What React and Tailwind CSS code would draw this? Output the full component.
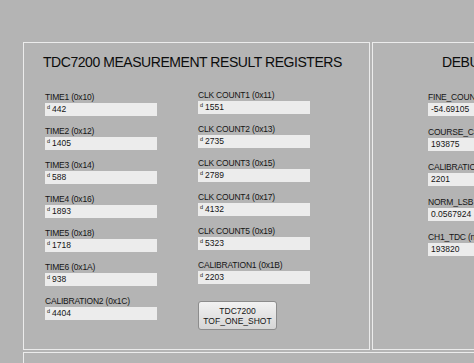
import React from 'react';

const left = [
  ['TIME1 (0x10)', '442'],
  ['TIME2 (0x12)', '1405'],
  ['TIME3 (0x14)', '588'],
  ['TIME4 (0x16)', '1893'],
  ['TIME5 (0x18)', '1718'],
  ['TIME6 (0x1A)', '938'],
  ['CALIBRATION2 (0x1C)', '4404'],
];

const right = [
  ['CLK COUNT1 (0x11)', '1551'],
  ['CLK COUNT2 (0x13)', '2735'],
  ['CLK COUNT3 (0x15)', '2789'],
  ['CLK COUNT4 (0x17)', '4132'],
  ['CLK COUNT5 (0x19)', '5323'],
  ['CALIBRATION1 (0x1B)', '2203'],
];

const debug = [
  ['FINE_COUNT', '-54.69105'],
  ['COURSE_COUNT', '193875'],
  ['CALIBRATION', '2201'],
  ['NORM_LSB', '0.0567924'],
  ['CH1_TDC (ns)', '193820'],
];

const Reg = ({ label, value }) => (
  <div className="flex flex-col">
    <div className="h-[11px] text-[8.5px] leading-[10px] tracking-[-0.2px] whitespace-nowrap text-[#141414]">{label}</div>
    <div className="h-[13px] w-[112px] bg-[#ececec] flex items-center pl-[2px] text-[8.5px] text-[#141414]">
      <span className="text-[5.5px] leading-none self-start mt-[2px] mr-[2px]">d</span>
      <span className="leading-none">{value}</span>
    </div>
  </div>
);

const Num = ({ label, value }) => (
  <div className="flex flex-col">
    <div className="h-[11px] text-[8.5px] leading-[10px] tracking-[-0.2px] whitespace-nowrap text-[#141414]">{label}</div>
    <div className="h-[13px] w-[120px] bg-[#ececec] flex items-center pl-[3px] text-[8.5px] leading-none text-[#141414]">
      {value}
    </div>
  </div>
);

export default function App() {
  return (
    <div className="w-[474px] h-[363px] overflow-hidden bg-[#b4b4b4] pt-[42px] pl-[23px] font-['Liberation_Sans',Arial,sans-serif]">
      <div className="flex gap-[2px] w-[700px]">
        <div className="w-[347px] h-[308px] border border-[#ececec] shrink-0 pt-[11px] pl-[19px]">
          <div className="text-[14px] leading-[16px] tracking-[-0.45px] text-[#0c0c0c] whitespace-nowrap">
            TDC7200 MEASUREMENT RESULT REGISTERS
          </div>
          <div className="flex gap-[41px] pl-[2px] mt-[20px]">
            <div className="flex flex-col gap-[10px] pt-[2px]">
              {left.map(([l, v]) => <Reg key={l} label={l} value={v} />)}
            </div>
            <div className="flex flex-col gap-[10px]">
              {right.map(([l, v]) => <Reg key={l} label={l} value={v} />)}
              <button className="mt-[7px] w-[79px] h-[29px] rounded-[3px] border border-[#8c8c8c] bg-gradient-to-b from-[#f2f2f2] to-[#d6d6d6] text-[8.5px] leading-[10px] text-[#141414] flex flex-col items-center justify-center">
                <span>TDC7200</span>
                <span>TOF_ONE_SHOT</span>
              </button>
            </div>
          </div>
        </div>
        <div className="w-[300px] h-[308px] border border-[#ececec] shrink-0 pt-[11px]">
          <div className="pl-[69px] text-[14px] leading-[16px] tracking-[-0.45px] text-[#0c0c0c] whitespace-nowrap">
            DEBUG DATA
          </div>
          <div className="flex flex-col gap-[11px] pl-[55px] mt-[22px]">
            {debug.map(([l, v]) => <Num key={l} label={l} value={v} />)}
          </div>
        </div>
      </div>
      <div className="mt-[2px] w-[700px] h-[40px] border border-[#ececec]" />
    </div>
  );
}
